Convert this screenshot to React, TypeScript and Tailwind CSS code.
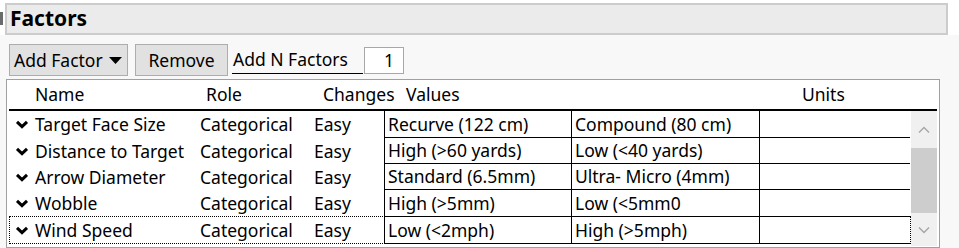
import React from "react";

type Factor = {
  name: string;
  role: string;
  changes: string;
  low: string;
  high: string;
  units: string;
  height: string;
};

const factors: Factor[] = [
  { name: "Target Face Size", role: "Categorical", changes: "Easy", low: "Recurve (122 cm)", high: "Compound (80 cm)", units: "", height: "h-[27px]" },
  { name: "Distance to Target", role: "Categorical", changes: "Easy", low: "High (>60 yards)", high: "Low (<40 yards)", units: "", height: "h-[26px]" },
  { name: "Arrow Diameter", role: "Categorical", changes: "Easy", low: "Standard (6.5mm)", high: "Ultra- Micro (4mm)", units: "", height: "h-[26px]" },
  { name: "Wobble", role: "Categorical", changes: "Easy", low: "High (>5mm)", high: "Low (<5mm0", units: "", height: "h-[27px]" },
  { name: "Wind Speed", role: "Categorical", changes: "Easy", low: "Low (<2mph)", high: "High (>5mph)", units: "", height: "h-[27px]" },
];

function Chevron() {
  return (
    <svg width="14" height="9" viewBox="0 0 14 9" className="shrink-0">
      <polyline points="2,1.8 7,6.6 12,1.8" fill="none" stroke="#000" strokeWidth="3" strokeLinejoin="miter" />
    </svg>
  );
}

function FactorRow({ factor, focused }: { factor: Factor; focused: boolean }) {
  return (
    <div className={`relative flex ${factor.height}`}>
      <div className="flex w-[187px] items-center pl-[6px]">
        <Chevron />
        <span className="ml-[6px] whitespace-nowrap">{factor.name}</span>
      </div>
      <div className="flex w-[114px] items-center pl-[4px]">{factor.role}</div>
      <div className="flex w-[74px] items-center pl-[4px]">{factor.changes}</div>
      <div className="flex w-[188px] items-center border-x border-b border-black pl-[3px] whitespace-nowrap">
        {factor.low}
      </div>
      <div className="flex w-[188px] items-center border-r border-b border-black pl-[3px] whitespace-nowrap">
        {factor.high}
      </div>
      <div className="flex w-[150px] items-center border-b border-black pl-[3px]">{factor.units}</div>
      {focused ? (
        <div className="pointer-events-none absolute -top-px right-0 bottom-0 left-0 border border-dotted border-black" />
      ) : null}
    </div>
  );
}

function ScrollBar() {
  return (
    <div className="flex w-[26px] flex-col bg-[#f0f0f0]">
      <div className="flex h-[37px] items-center justify-center">
        <svg width="12" height="8" viewBox="0 0 12 8">
          <polyline points="1,6.5 6,1.5 11,6.5" fill="none" stroke="#a6a6a6" strokeWidth="1.4" />
        </svg>
      </div>
      <div className="h-[65px] bg-[#cdcdcd]" />
      <div className="flex flex-1 items-center justify-center">
        <svg width="12" height="8" viewBox="0 0 12 8">
          <polyline points="1,1.5 6,6.5 11,1.5" fill="none" stroke="#a6a6a6" strokeWidth="1.4" />
        </svg>
      </div>
    </div>
  );
}

export default function App() {
  return (
    <div
      className="relative h-[248px] w-[959px] overflow-hidden bg-[#f8f8f8] text-[17.5px] text-black"
      style={{ fontFamily: '"Noto Sans", "Open Sans", sans-serif' }}
    >
      <div className="absolute top-[12px] left-0 h-[13px] w-[3px] bg-[#6b6b6b]" />

      {/* outline header */}
      <div className="bg-white pt-[3px] pr-[11px] pl-[5px]">
        <div className="flex h-[32px] items-center border-2 border-[#cccccc] bg-[#ebebeb] pl-[3px] text-[21px] font-bold">
          Factors
        </div>
      </div>

      {/* toolbar */}
      <div className="mt-[9px] flex h-[32px] items-stretch pl-[9px]">
        <button
          type="button"
          className="flex w-[119px] items-center border border-[#adadad] bg-[#e1e1e1] pl-[4px]"
        >
          Add Factor
          <svg width="13" height="7" viewBox="0 0 13 7" className="ml-[6px]">
            <polygon points="0,0 13,0 6.5,7" fill="#000" />
          </svg>
        </button>
        <button
          type="button"
          className="ml-[7px] flex w-[93px] items-center justify-center border border-[#adadad] bg-[#e1e1e1]"
        >
          Remove
        </button>
        <div className="ml-[4px] flex items-center">
          <span className="flex h-[27px] w-[131px] items-center border-b-[1.5px] border-black pl-[1px]">
            Add N Factors
          </span>
          <div className="ml-[1px] flex h-[27px] w-[40px] items-center justify-end border border-[#a8a8a8] bg-white pr-[9px]">
            1
          </div>
        </div>
      </div>

      {/* factor table */}
      <div className="mt-[3px] ml-[6px] h-[169px] w-[934px] border border-[#a0a0a0] bg-white pr-[2px] pl-[2px]">
        <div className="flex h-[31px] items-center border-b-2 border-black">
          <span className="w-[197px] pl-[26px]">Name</span>
          <span className="w-[117px]">Role</span>
          <span className="w-[83px]">Changes</span>
          <span className="w-[396px]">Values</span>
          <span>Units</span>
        </div>
        <div className="flex h-[135px]">
          <div className="w-[902px]">
            {factors.map((factor, i) => (
              <FactorRow key={factor.name} factor={factor} focused={i === factors.length - 1} />
            ))}
          </div>
          <ScrollBar />
        </div>
      </div>
    </div>
  );
}
